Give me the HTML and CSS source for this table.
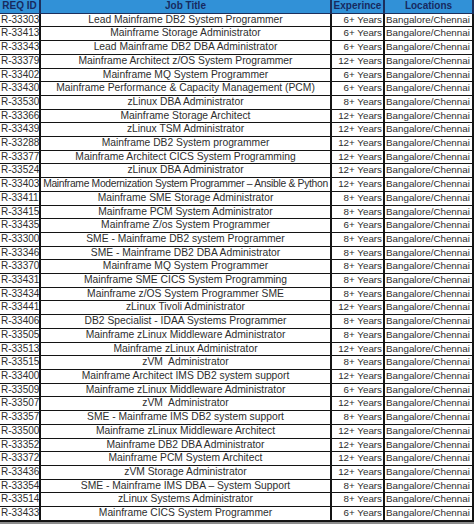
FILE: index.html
```html
<!DOCTYPE html>
<html lang="en">
<head>
<meta charset="utf-8">
<title>Mainframe Openings</title>
<link rel="stylesheet" href="styles.css">
</head>
<body>
<div class="sheet">
  <div class="hd">REQ ID</div><div class="hd">Job Title</div><div class="hd">Experince</div><div class="hd">Locations</div>
  <div class="id">R-33303</div><div class="job">Lead Mainframe DB2 System Programmer</div><div class="exp">6+ Years</div><div class="loc">Bangalore/Chennai</div>
  <div class="id">R-33413</div><div class="job">Mainframe Storage Administrator</div><div class="exp">6+ Years</div><div class="loc">Bangalore/Chennai</div>
  <div class="id">R-33343</div><div class="job">Lead Mainframe DB2 DBA Administrator</div><div class="exp">6+ Years</div><div class="loc">Bangalore/Chennai</div>
  <div class="id">R-33379</div><div class="job">Mainframe Architect z/OS System Programmer</div><div class="exp">12+ Years</div><div class="loc">Bangalore/Chennai</div>
  <div class="id">R-33402</div><div class="job">Mainframe MQ System Programmer</div><div class="exp">6+ Years</div><div class="loc">Bangalore/Chennai</div>
  <div class="id">R-33430</div><div class="job">Mainframe Performance &amp; Capacity Management (PCM)</div><div class="exp">6+ Years</div><div class="loc">Bangalore/Chennai</div>
  <div class="id">R-33530</div><div class="job">zLinux DBA Administrator</div><div class="exp">8+ Years</div><div class="loc">Bangalore/Chennai</div>
  <div class="id">R-33366</div><div class="job">Mainframe Storage Architect</div><div class="exp">12+ Years</div><div class="loc">Bangalore/Chennai</div>
  <div class="id">R-33439</div><div class="job">zLinux TSM Administrator</div><div class="exp">12+ Years</div><div class="loc">Bangalore/Chennai</div>
  <div class="id">R-33288</div><div class="job">Mainframe DB2 System programmer</div><div class="exp">12+ Years</div><div class="loc">Bangalore/Chennai</div>
  <div class="id">R-33377</div><div class="job">Mainframe Architect CICS System Programming</div><div class="exp">12+ Years</div><div class="loc">Bangalore/Chennai</div>
  <div class="id">R-33524</div><div class="job">zLinux DBA Administrator</div><div class="exp">12+ Years</div><div class="loc">Bangalore/Chennai</div>
  <div class="id">R-33403</div><div class="job tight">Mainframe Modernization System Programmer – Ansible &amp; Python</div><div class="exp">12+ Years</div><div class="loc">Bangalore/Chennai</div>
  <div class="id">R-33411</div><div class="job">Mainframe SME Storage Administrator</div><div class="exp">8+ Years</div><div class="loc">Bangalore/Chennai</div>
  <div class="id">R-33415</div><div class="job">Mainframe PCM System Administrator</div><div class="exp">8+ Years</div><div class="loc">Bangalore/Chennai</div>
  <div class="id">R-33435</div><div class="job">Mainframe Z/os System Programmer</div><div class="exp">6+ Years</div><div class="loc">Bangalore/Chennai</div>
  <div class="id">R-33300</div><div class="job">SME - Mainframe DB2 system Programmer</div><div class="exp">8+ Years</div><div class="loc">Bangalore/Chennai</div>
  <div class="id">R-33346</div><div class="job">SME - Mainframe DB2 DBA Administrator</div><div class="exp">8+ Years</div><div class="loc">Bangalore/Chennai</div>
  <div class="id">R-33370</div><div class="job">Mainframe MQ System Programmer</div><div class="exp">8+ Years</div><div class="loc">Bangalore/Chennai</div>
  <div class="id">R-33431</div><div class="job">Mainframe SME CICS System Programming</div><div class="exp">8+ Years</div><div class="loc">Bangalore/Chennai</div>
  <div class="id">R-33434</div><div class="job">Mainframe z/OS System Programmer SME</div><div class="exp">8+ Years</div><div class="loc">Bangalore/Chennai</div>
  <div class="id">R-33441</div><div class="job">zLinux Tivoli Administrator</div><div class="exp">12+ Years</div><div class="loc">Bangalore/Chennai</div>
  <div class="id">R-33406</div><div class="job">DB2 Specialist - IDAA Systems Programmer</div><div class="exp">8+ Years</div><div class="loc">Bangalore/Chennai</div>
  <div class="id">R-33505</div><div class="job">Mainframe zLinux Middleware Administrator</div><div class="exp">8+ Years</div><div class="loc">Bangalore/Chennai</div>
  <div class="id">R-33513</div><div class="job">Mainframe zLinux Administrator</div><div class="exp">12+ Years</div><div class="loc">Bangalore/Chennai</div>
  <div class="id">R-33515</div><div class="job">zVM&nbsp; Administrator</div><div class="exp">8+ Years</div><div class="loc">Bangalore/Chennai</div>
  <div class="id">R-33400</div><div class="job">Mainframe Architect IMS DB2 system support</div><div class="exp">12+ Years</div><div class="loc">Bangalore/Chennai</div>
  <div class="id">R-33509</div><div class="job">Mainframe zLinux Middleware Administrator</div><div class="exp">6+ Years</div><div class="loc">Bangalore/Chennai</div>
  <div class="id">R-33507</div><div class="job">zVM&nbsp; Administrator</div><div class="exp">12+ Years</div><div class="loc">Bangalore/Chennai</div>
  <div class="id">R-33357</div><div class="job">SME - Mainframe IMS DB2 system support</div><div class="exp">8+ Years</div><div class="loc">Bangalore/Chennai</div>
  <div class="id">R-33500</div><div class="job">Mainframe zLinux Middleware Architect</div><div class="exp">12+ Years</div><div class="loc">Bangalore/Chennai</div>
  <div class="id">R-33352</div><div class="job">Mainframe DB2 DBA Administrator</div><div class="exp">12+ Years</div><div class="loc">Bangalore/Chennai</div>
  <div class="id">R-33372</div><div class="job">Mainframe PCM System Architect</div><div class="exp">12+ Years</div><div class="loc">Bangalore/Chennai</div>
  <div class="id">R-33436</div><div class="job">zVM Storage Administrator</div><div class="exp">12+ Years</div><div class="loc">Bangalore/Chennai</div>
  <div class="id">R-33354</div><div class="job">SME - Mainframe IMS DBA – System Support</div><div class="exp">8+ Years</div><div class="loc">Bangalore/Chennai</div>
  <div class="id">R-33514</div><div class="job">zLinux Systems Administrator</div><div class="exp">8+ Years</div><div class="loc">Bangalore/Chennai</div>
  <div class="id">R-33433</div><div class="job">Mainframe CICS System Programmer</div><div class="exp">6+ Years</div><div class="loc">Bangalore/Chennai</div>
</div>
</body>
</html>
```

FILE: styles.css
```css
html, body {
  margin: 0;
  padding: 0;
  background: #8c8c8c;
}

body {
  width: 474px;
  height: 524px;
  overflow: hidden;
  font-family: "Liberation Sans", Arial, sans-serif;
  font-size: 10px;
  color: #2e2e2e;
}

.sheet {
  display: grid;
  grid-template-columns: 41px 291px 53px 89px;
  grid-auto-rows: 13.71px;
  width: 474px;
  background: #ffffff;
  border-bottom: 1px solid #111111;
  box-sizing: border-box;
}

.sheet > div {
  box-sizing: border-box;
  border-right: 2px solid #141414;
  border-bottom: 1px solid #141414;
  line-height: 12.7px;
  white-space: nowrap;
  overflow: hidden;
  padding: 0 1px;
}

.hd {
  background: #3191d7;
  color: #172a60;
  font-weight: bold;
  text-align: center;
  border-color: #1c2f5c !important;
}

.id {
  text-align: left;
}

.job {
  text-align: center;
  font-size: 10.3px;
}

.job.tight {
  letter-spacing: -0.3px;
}

.exp {
  text-align: right;
  font-size: 9.8px;
}

.loc {
  text-align: left;
  font-size: 9.8px;
  padding-left: 2px;
}

.hd.loc,
.hd.exp {
  font-size: 10px;
}
```
